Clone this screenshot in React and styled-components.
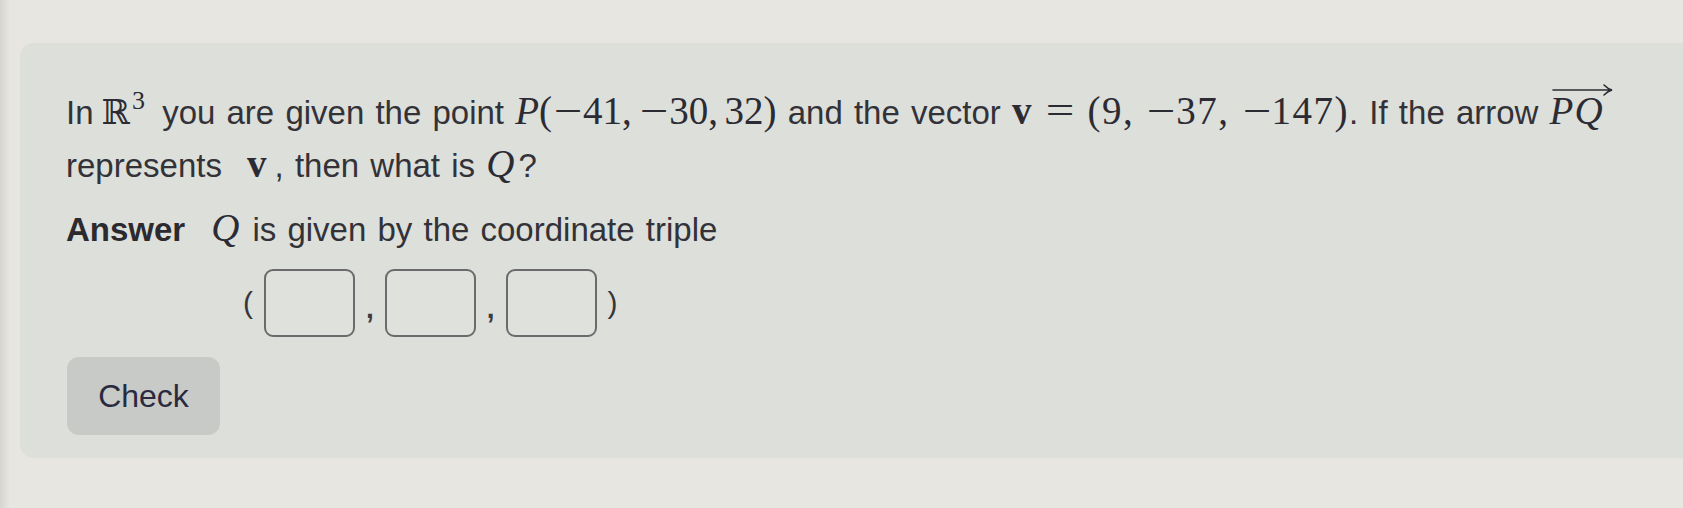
import React from "react";
import styled, { createGlobalStyle } from "styled-components";

const GlobalStyle = createGlobalStyle`
  html, body {
    margin: 0;
    padding: 0;
    background: #e8e6e1;
    font-family: "Liberation Sans", Arial, sans-serif;
    color: #333238;
  }
`;

const Page = styled.div`
  height: 508px;
  overflow: hidden;
  padding: 43px 0 0 20px;
  box-sizing: border-box;
  background: linear-gradient(90deg, #d6d5d1 0, #e8e6e1 10px);
`;

const Card = styled.section`
  height: 415px;
  box-sizing: border-box;
  background: #dcdfda;
  border-radius: 14px 0 0 14px;
  padding: 44px 0 24px 46px;
`;

const Question = styled.p`
  margin: 0;
  font-size: 33px;
  line-height: 48px;
  word-spacing: 2px;
  white-space: nowrap;
`;

const M = styled.span`
  font-family: "Liberation Serif", "Times New Roman", serif;
  font-size: 39px;
  word-spacing: 0;
  color: #2c2b33;
  font-style: ${(p) => (p.$it ? "italic" : "normal")};
  font-weight: ${(p) => (p.$bold ? 700 : 400)};
  margin: ${(p) => p.$m || "0"};
  letter-spacing: ${(p) => p.$ls || "0"};
`;

const Rel = styled.span`
  display: inline-block;
  font-family: "Liberation Serif", "Times New Roman", serif;
  font-size: 39px;
  color: #2c2b33;
  transform: scaleX(1.3);
  margin: 0 17px;
`;

const Minus = styled.span`
  display: inline-block;
  letter-spacing: 0;
  transform: scaleX(1.3);
  margin: ${(p) => p.$m || "0 4px"};
`;

const Blackboard = styled.span`
  font-family: "DejaVu Serif", serif;
  font-size: 34px;
  color: #2c2b33;
  margin-left: -3px;
`;

const Sup = styled.sup`
  font-family: "Liberation Serif", serif;
  font-size: 26px;
  color: #2c2b33;
  vertical-align: 0;
  position: relative;
  top: -15px;
  margin: 0 6px 0 2px;
`;

const Thin = styled.span`
  display: inline-block;
  width: ${(p) => p.$w || "6.5px"};
`;

const Arrowed = styled.span`
  position: relative;
  display: inline-block;
`;

const OverArrow = styled.svg`
  position: absolute;
  left: 3px;
  top: -3px;
  width: 60px;
  height: 12px;
  overflow: visible;
`;

const AnswerRow = styled.div`
  margin-top: 14px;
  font-size: 33px;
  line-height: 48px;
  word-spacing: 2px;
  display: flex;
  align-items: baseline;
  white-space: pre;
`;

const Label = styled.span`
  font-weight: 700;
  margin-right: 26px;
  color: #2b2a2f;
`;

const Triple = styled.div`
  margin: 15px 0 0 177px;
  display: flex;
  align-items: center;
  gap: 11px;
  font-size: 30px;
`;

const Paren = styled.span`
  line-height: 1;
  color: #38363b;
`;

const Comma = styled.span`
  line-height: 1;
  margin-top: 12px;
  font-size: 28px;
  font-weight: 700;
  color: #3d3b40;
`;

const Box = styled.input`
  width: 91px;
  height: 68px;
  box-sizing: border-box;
  border: 2px solid #6c6a6d;
  border-radius: 9px;
  background: #dfe1dc;
  outline: none;
  font-size: 26px;
  text-align: center;
`;

const CheckButton = styled.button`
  display: block;
  margin-top: 20px;
  margin-left: 1px;
  width: 153px;
  height: 78px;
  border: none;
  border-radius: 12px;
  background: #c7cac6;
  color: #2a2940;
  font-family: "Liberation Sans", Arial, sans-serif;
  font-size: 32px;
  cursor: pointer;
`;

const Neg = ({ children, m }) => (
  <>
    <Minus $m={m}>−</Minus>
    {children}
  </>
);

export default function App() {
  return (
    <>
      <GlobalStyle />
      <Page>
        <Card>
          <Question>
            In <Blackboard>ℝ</Blackboard>
            <Sup>3</Sup> you are given the point{" "}
            <M $it>P</M>
            <M>
              (<Neg m="0 4px 0 5px">41</Neg>,<Thin />
              <Neg m="0 4px 0 5px">30</Neg>,<Thin />
              32)
            </M>{" "}
            and the vector <M $bold>v</M>
            <Rel>=</Rel>
            <M $ls="1.5px">
              (9,<Thin $w="9px" />
              <Neg m="0 4px 0 7px">37</Neg>,<Thin $w="9px" />
              <Neg m="0 4px 0 7px">147</Neg>)
            </M>
            . If the arrow{" "}
            <Arrowed>
              <OverArrow viewBox="0 0 60 12">
                <path
                  d="M0 6 H58 M51 1 Q55 5 59 6 Q55 7 51 11"
                  fill="none"
                  stroke="#2c2b33"
                  strokeWidth="1.6"
                  strokeLinecap="round"
                />
              </OverArrow>
              <M $it $ls="1px">PQ</M>
            </Arrowed>
            <br />
            represents <M $bold $m="0 8px 0 14px">v</M>, then what is{" "}
            <M $it $m="0 4px 0 0">Q</M>?
          </Question>
          <AnswerRow>
            <Label>Answer</Label>
            <M $it $m="0 13px 0 0">Q</M>is given by the coordinate triple
          </AnswerRow>
          <Triple>
            <Paren>(</Paren>
            <Box aria-label="x coordinate" />
            <Comma>,</Comma>
            <Box aria-label="y coordinate" />
            <Comma>,</Comma>
            <Box aria-label="z coordinate" />
            <Paren>)</Paren>
          </Triple>
          <CheckButton>Check</CheckButton>
        </Card>
      </Page>
    </>
  );
}
